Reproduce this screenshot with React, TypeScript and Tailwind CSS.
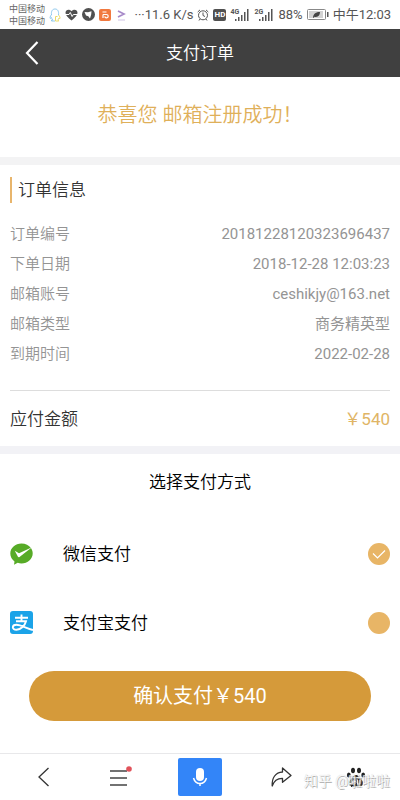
import { useState } from "react";
import type { ReactNode } from "react";

const orderRows = [
  { label: "订单编号", value: "20181228120323696437" },
  { label: "下单日期", value: "2018-12-28 12:03:23" },
  { label: "邮箱账号", value: "ceshikjy@163.net" },
  { label: "邮箱类型", value: "商务精英型" },
  { label: "到期时间", value: "2022-02-28" },
];

function Signal({ label }: { label: string }) {
  return (
    <span className="flex w-5 items-end">
      <span className="-mr-1 self-start text-[7px] leading-[7px] font-bold">{label}</span>
      <svg viewBox="0 0 14 12" className="h-3 w-[14px] shrink-0" fill="currentColor" aria-hidden="true">
        <path d="M0 10h1.500v2H0zM3 8h1.500v4H3zM6 6h1.500v6H6zM9 3h1.500v9H9zM12 0h1.500v12h-1.500z" />
      </svg>
    </span>
  );
}

function StatusBar() {
  return (
    <div className="flex h-[29px] items-center justify-between px-[9px] text-[13px] leading-4 whitespace-nowrap text-[#555555]">
      <div className="flex items-center gap-1">
        <div className="text-[9px] leading-3 text-[#666666]">
          <p>中国移动</p>
          <p>中国移动</p>
        </div>
        <svg viewBox="0 0 12 14" className="h-[14px] w-3" fill="none" strokeWidth="1" aria-hidden="true">
          <path d="M2.500 7C2 3 3.500 1 6 1s4 2 3.500 6" stroke="#8fc9ee" />
          <path d="M2.500 6.500C1 8.500.8 10 1.300 10.500L2.500 9.500c.3 1.500 1 2 1.500 2.500H2.500v1H6" stroke="#8fc9ee" />
          <path d="M9.500 7c1.500 1.500 1.800 3 1.500 3.500l-1-.5c-.3 1-.8 1.500-1.200 2l1 1H6.500V8.500h2" stroke="#ecdc6a" />
        </svg>
        <svg viewBox="0 0 13 12" className="h-3 w-[13px]" aria-hidden="true">
          <path d="M6.500 11.500C3 8.500.5 6.500.5 3.700.5.500 4.500-.3 6.500 2.300 8.500-.3 12.500.5 12.500 3.700c0 2.800-2.500 4.800-6 7.800z" fill="#505050" />
          <path d="M0 5.500h4l1.300-2 1.800 4 1.200-2H13" fill="none" stroke="#fff" />
        </svg>
        <svg viewBox="0 0 13 13" className="size-[13px]" aria-hidden="true">
          <circle cx="6.500" cy="6.500" r="6.500" fill="#505050" />
          <path d="M2.500 4l3.500.3 3.500-1-.3 3.200L8 10.500 6.300 8.300 4 7.500z" fill="#fff" />
        </svg>
        <svg viewBox="0 0 12 12" className="size-3" aria-hidden="true">
          <rect width="12" height="12" rx="2" fill="#f1793f" />
          <path d="M3.500 3h4M4 5.500h3.500a1.700 1.700 0 1 1-1.700 1.900M4 5.500v3.500" fill="none" stroke="#fff" strokeWidth="1.200" />
        </svg>
        <svg viewBox="0 0 12 12" className="size-3" fill="none" aria-hidden="true">
          <path d="M3 2l6 3-6 3" stroke="#a78ac9" strokeWidth="1.700" />
          <path d="M3 11h7" stroke="#cfc3e6" />
        </svg>
      </div>
      <div className="flex items-center gap-1">
        <span>···11.6 K/s</span>
        <svg viewBox="0 0 12 12" className="size-3" fill="none" stroke="currentColor" aria-hidden="true">
          <circle cx="6" cy="6.300" r="4.500" />
          <path d="M6 3.500v3l2 1M.7 3L3 .9M11.300 3L9 .9M3 10l-1 1.500M9 10l1 1.500" />
        </svg>
        <span className="flex h-3 w-[13px] items-center justify-center rounded-xs bg-[#505050] text-[8px] leading-3 font-bold text-white">HD</span>
        <Signal label="4G" />
        <Signal label="2G" />
        <span>88%</span>
        <svg viewBox="0 0 22 11" className="h-[11px] w-[22px]" aria-hidden="true">
          <rect x=".5" y=".5" width="18" height="10" rx="1" fill="#fff" stroke="#888" />
          <path d="M2 2h14v7H2z" fill="#d2d2d2" />
          <path d="M6 8.500c.5-4 3-5.500 7-5.500 0 3.500-2 5.500-5.500 4.700L6.500 9z" fill="#444" />
          <path d="M20 3h1.500v5H20z" fill="#555" />
        </svg>
        <time>中午12:03</time>
      </div>
    </div>
  );
}

function WechatPayIcon() {
  return (
    <svg viewBox="0 0 23 22" className="h-[22px] w-[23px]" aria-hidden="true">
      <path d="M11.500.5C5.200.5.300 5 .300 10.500c0 3.200 1.600 6 4.200 7.900L4 21.700l3.700-1.900c1.200.4 2.500.6 3.800.6 6.200 0 11.200-4.400 11.200-9.900 0-1.900-.6-3.700-1.600-5.200C19 2.400 15.500.5 11.500.5z" fill="#57ab27" />
      <path d="M4.800 7.800l4.200 2.400L22 4.300 9.500 14c-.7.500-1.300.3-1.700-.4z" fill="#fff" />
    </svg>
  );
}

function AlipayIcon() {
  return (
    <svg viewBox="0 0 23 23" className="size-[23px]" aria-hidden="true">
      <rect width="23" height="23" rx="3" fill="#1ba3e8" />
      <path d="M5 6.800h13M11.500 3.500v6.500M6 10.300h10c-1 4-5 8.500-9.500 8.500-5 0-4.800-5 0-5 4 0 9 3 16.500 5.300" fill="none" stroke="#fff" strokeWidth="1.900" />
    </svg>
  );
}

interface MethodProps {
  id: string;
  name: string;
  icon: ReactNode;
  checked: boolean;
  onSelect: () => void;
}

function PaymentMethod({ id, name, icon, checked, onSelect }: MethodProps) {
  return (
    <label htmlFor={id} className="flex h-[69px] cursor-pointer items-center text-[17px] leading-6 font-[350] text-black">
      <span className="w-[53px]">{icon}</span>
      <span className="flex-1">{name}</span>
      <span className="grid">
        <input
          id={id}
          type="radio"
          name="payment"
          checked={checked}
          onChange={onSelect}
          className="peer col-start-1 row-start-1 size-[22px] cursor-pointer appearance-none rounded-full bg-[#e8b566]"
        />
        <svg viewBox="0 0 22 22" className="pointer-events-none invisible col-start-1 row-start-1 size-[22px] peer-checked:visible" fill="none" stroke="#fff" strokeWidth="1.200" aria-hidden="true">
          <path d="M5 10.500l4.500 4.500L17 7.500" />
        </svg>
      </span>
    </label>
  );
}

function BottomBar() {
  return (
    <nav className="relative grid h-[47px] grid-cols-[88px_1fr_auto_1fr_88px] items-center border-t border-[#e8e8ea] text-[#333333]">
      <button type="button" aria-label="后退" className="flex justify-center">
        <svg viewBox="0 0 12 20" className="h-5 w-3" fill="none" stroke="currentColor" strokeWidth="1.300" aria-hidden="true">
          <path d="M10.500 1L1 10l9.500 9" />
        </svg>
      </button>
      <button type="button" aria-label="菜单" className="flex justify-center pr-6">
        <svg viewBox="0 0 24 22" className="h-[22px] w-6" aria-hidden="true">
          <path d="M1 5h17M1 12h17M1 19h17" fill="none" stroke="#444" strokeWidth="1.500" />
          <circle cx="20" cy="3" r="2.800" fill="#e1525a" />
        </svg>
      </button>
      <button type="button" aria-label="语音" className="flex h-[38px] w-11 items-center justify-center rounded-xs bg-[#3385f8]">
        <svg viewBox="0 0 16 18" className="h-[18px] w-4" aria-hidden="true">
          <rect x="4" width="8" height="13" rx="4" fill="#fff" />
          <path d="M1.500 10c1 3.500 3.500 5.500 6.500 5.500s5.500-2 6.500-5.500M8 15v3" fill="none" stroke="#fff" strokeWidth="1.500" />
        </svg>
      </button>
      <button type="button" aria-label="分享" className="flex justify-center pl-7">
        <svg viewBox="0 0 21 20" className="h-5 w-[21px]" fill="none" stroke="currentColor" strokeWidth="1.300" strokeLinejoin="round" aria-hidden="true">
          <path d="M11.500 1l8.500 7.500-8.500 6.800v-4C6.500 11.200 3 13.500 1.200 19 .8 11 4.500 5.500 11.500 5z" />
        </svg>
      </button>
      <button type="button" aria-label="百度" className="flex justify-center">
        <svg viewBox="0 0 20 20" className="size-5" fill="#222" aria-hidden="true">
          <ellipse cx="7" cy="3.500" rx="2" ry="2.800" />
          <ellipse cx="13" cy="3.500" rx="2" ry="2.800" />
          <ellipse cx="2.800" cy="8" rx="1.900" ry="2.600" />
          <ellipse cx="17.200" cy="8" rx="1.900" ry="2.600" />
          <path d="M10 8c2.200 0 3 2 4.500 3.500 2 2 3 3.500 2.300 5.700-.6 2-2.300 2.300-6.800 2.300s-6.200-.3-6.800-2.300c-.7-2.200.3-3.700 2.300-5.700C7 10 7.800 8 10 8z" />
          <path d="M9 11v6H6.500v-3H9M11.500 13v4H14v-4" fill="none" stroke="#fff" />
        </svg>
      </button>
      <span className="pointer-events-none absolute top-[17px] right-[10px] text-[14px] leading-5 font-light whitespace-nowrap text-white [text-shadow:1px_1px_0_#aaa,0_0_1px_#bbb]">
        知乎 @啦啦啦
      </span>
    </nav>
  );
}

export default function App() {
  const [method, setMethod] = useState("wechat");

  return (
    <div className="flex min-h-screen flex-col bg-white font-[Roboto,'Noto_Sans_CJK_SC',sans-serif] text-[#333333]">
      <StatusBar />
      <header className="grid h-12 grid-cols-[64px_1fr_64px] items-center bg-[#404040] text-white">
        <button type="button" aria-label="返回" className="flex justify-center">
          <svg viewBox="0 0 14 24" className="h-6 w-[14px]" fill="none" stroke="currentColor" strokeWidth="2.200" aria-hidden="true">
            <path d="M12.500 1L2 12l10.500 11" />
          </svg>
        </button>
        <h1 className="text-center text-[17px] leading-6 font-[350]">支付订单</h1>
      </header>

      <main className="flex flex-1 flex-col">
        <p className="pt-[22px] pb-[26px] text-center text-[20px] leading-8 font-[350] text-[#dfb05a]">恭喜您 邮箱注册成功！</p>

        <section className="border-t-8 border-[#f3f3f4] px-[10px] pt-3">
          <h2 className="border-l-2 border-[#e8b56c] pl-[6px] text-[17px] leading-[26px] font-[350]">订单信息</h2>
          <dl className="mt-4 text-[15px] leading-[30px] text-[#949494]">
            {orderRows.map((row) => (
              <div key={row.label} className="flex justify-between">
                <dt className="font-[350]">{row.label}</dt>
                <dd>{row.value}</dd>
              </div>
            ))}
          </dl>
          <div className="mt-[21px] flex h-14 items-center justify-between border-t border-[#dddddd] text-[17px] leading-6">
            <span className="font-[350]">应付金额</span>
            <span className="text-[#e0b565]">￥540</span>
          </div>
        </section>

        <section className="border-t-8 border-[#f2f2f6] px-[10px]">
          <h2 className="pt-4 pb-[25px] text-center text-[17px] leading-6 font-[350] text-black">选择支付方式</h2>
          <PaymentMethod id="wechat" name="微信支付" icon={<WechatPayIcon />} checked={method === "wechat"} onSelect={() => setMethod("wechat")} />
          <PaymentMethod id="alipay" name="支付宝支付" icon={<AlipayIcon />} checked={method === "alipay"} onSelect={() => setMethod("alipay")} />
        </section>

        <button type="button" className="mx-[29px] mt-[14px] mb-6 h-[50px] rounded-full bg-[#d59a3a] text-[20px] leading-6 text-white">
          确认支付￥540
        </button>
      </main>
      <BottomBar />
    </div>
  );
}
